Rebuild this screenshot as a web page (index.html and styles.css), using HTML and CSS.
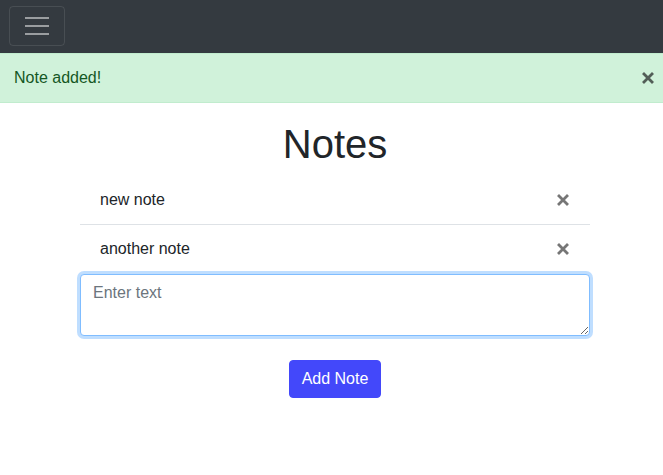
FILE: index.html
```html
<!DOCTYPE html>
<html>
<head>
<meta charset="utf-8">
<link rel="stylesheet" href="styles.css">
</head>
<body>
<nav class="navbar">
  <button class="toggler" aria-label="menu"><span class="bar"></span><span class="bar"></span><span class="bar"></span></button>
</nav>
<div class="alert">
  <span>Note added!</span>
  <button class="close close-alert" aria-label="close"><svg width="12" height="12" viewBox="0 0 12 12"><path d="M2 2 L10 10 M10 2 L2 10" stroke="currentColor" stroke-width="2.8" stroke-linecap="square"/></svg></button>
</div>
<main class="container">
  <h1 class="title">Notes</h1>
  <ul class="notes">
    <li class="note"><span>new note</span><button class="close" aria-label="delete"><svg width="12" height="12" viewBox="0 0 12 12"><path d="M2 2 L10 10 M10 2 L2 10" stroke="currentColor" stroke-width="2.8" stroke-linecap="square"/></svg></button></li>
    <li class="note"><span>another note</span><button class="close" aria-label="delete"><svg width="12" height="12" viewBox="0 0 12 12"><path d="M2 2 L10 10 M10 2 L2 10" stroke="currentColor" stroke-width="2.8" stroke-linecap="square"/></svg></button></li>
  </ul>
  <textarea class="input" rows="2" placeholder="Enter text"></textarea>
  <div class="actions"><button class="btn">Add Note</button></div>
</main>
</body>
</html>
```
FILE: styles.css
```css
* { box-sizing: border-box; }
body {
  margin: 0;
  font-family: "Liberation Sans", Arial, sans-serif;
  font-size: 16px;
  line-height: 24px;
  color: #212529;
  background: #fff;
}
.navbar {
  background: #343a40;
  height: 53px;
  padding: 6px 9px;
  display: flex;
  align-items: flex-start;
}
.toggler {
  width: 56px;
  height: 40px;
  background: transparent;
  border: 1px solid rgba(255,255,255,0.1);
  border-radius: 4px;
  display: flex;
  flex-direction: column;
  justify-content: center;
  align-items: center;
  gap: 6px;
  padding: 0;
}
.bar {
  display: block;
  width: 24px;
  height: 2px;
  background: rgba(255,255,255,0.5);
}
.alert {
  background: #d0f2da;
  color: #155724;
  border-top: 1px solid #c1ecce;
  border-bottom: 1px solid #c1ecce;
  height: 50px;
  padding: 0 9px 0 14px;
  display: flex;
  align-items: center;
  justify-content: space-between;
}
.close {
  background: none;
  border: 0;
  padding: 0;
  display: flex;
  color: #767676;
  cursor: pointer;
}
.close-alert { color: #525e57; }
.container {
  width: 510px;
  margin-left: 80px;
}
.title {
  margin: 17px 0 8px;
  font-size: 40px;
  font-weight: 400;
  line-height: 48px;
  text-align: center;
}
.notes {
  list-style: none;
  margin: 0;
  padding: 0;
}
.note {
  display: flex;
  justify-content: space-between;
  align-items: center;
  padding: 12px 21px 12px 20px;
}
.note + .note { border-top: 1px solid #dee2e6; }
.input {
  display: block;
  width: 510px;
  height: 62px;
  padding: 6px 12px;
  font-family: inherit;
  font-size: 16px;
  line-height: 24px;
  color: #495057;
  border: 1px solid #80bdff;
  border-radius: 4px;
  box-shadow: 0 0 0 3px rgba(0,123,255,0.25);
  outline: none;
  margin-top: 1px;
}
.input::placeholder { color: #6c757d; }
.actions {
  display: flex;
  justify-content: center;
  margin-top: 24px;
}
.btn {
  background: #4348fa;
  color: #fff;
  border: 1px solid #4348fa;
  border-radius: 4px;
  font-family: inherit;
  font-size: 16px;
  line-height: 24px;
  padding: 6px 12px;
}
```
